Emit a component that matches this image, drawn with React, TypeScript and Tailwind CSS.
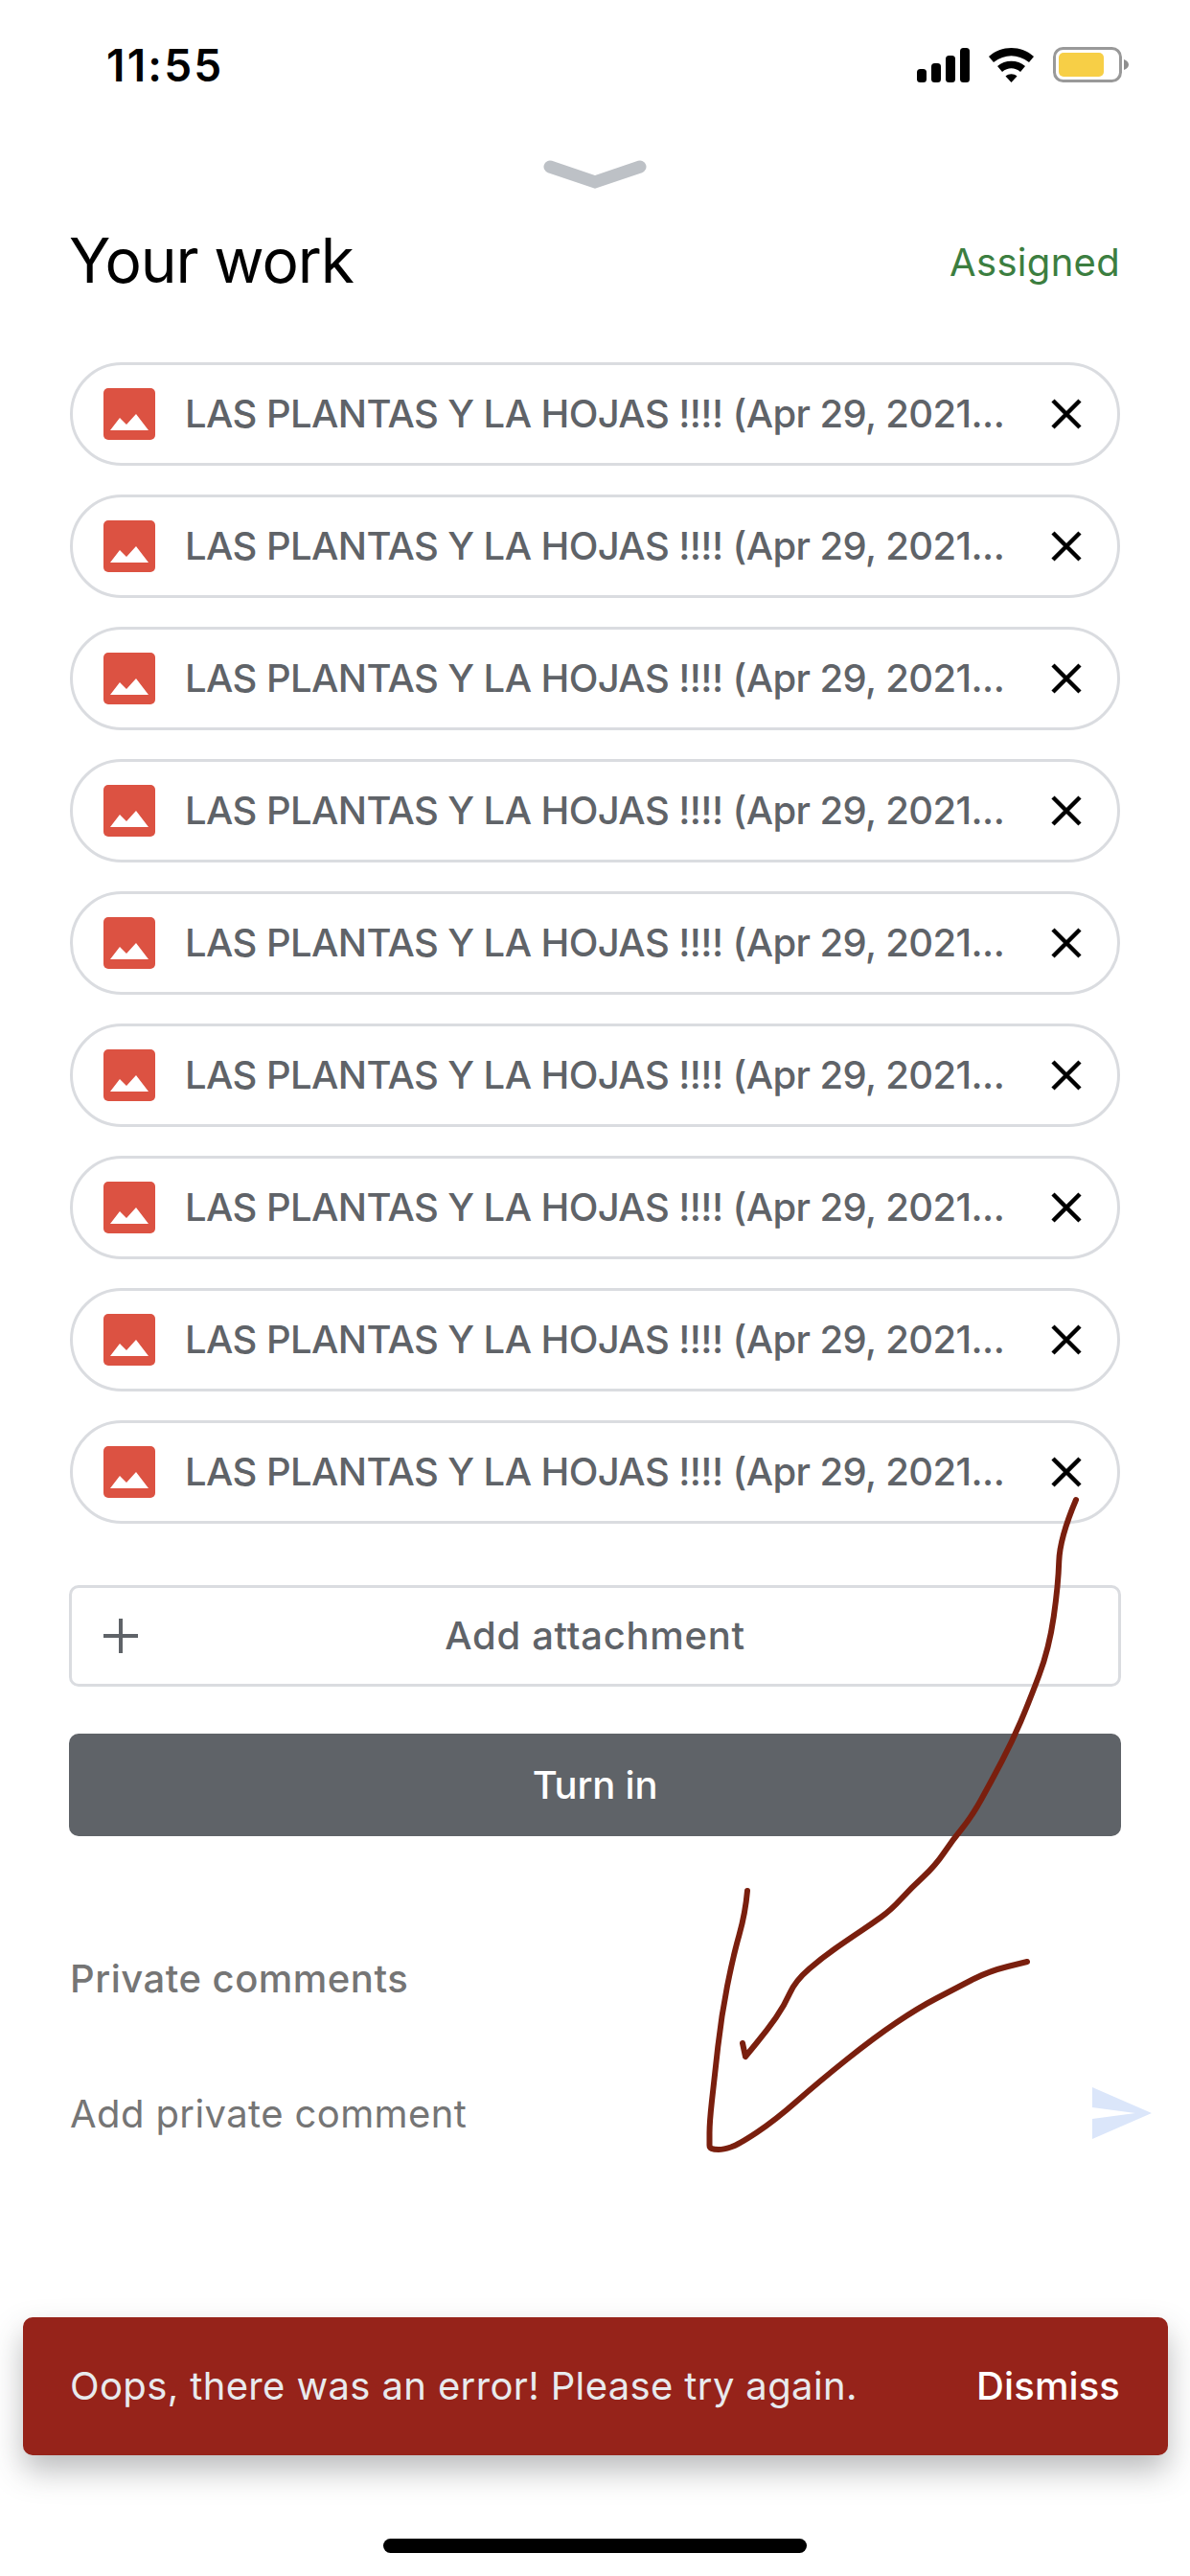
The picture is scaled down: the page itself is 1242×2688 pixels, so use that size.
const chips = Array.from({ length: 9 }, (_, i) => i);

const arrowShaft: [number, number][] = [
  [1123, 1565], [1106, 1605], [1104.5, 1654], [1095, 1720], [1074, 1776], [1056.5, 1817], [1035, 1858],
  [1014, 1896], [995, 1919], [976, 1947], [951, 1970], [930, 1993], [909, 2008], [889.5, 2021], [859, 2042],
  [830, 2067], [818.5, 2093], [801, 2118], [778, 2146],
];

const arrowHead: [number, number][] = [
  [780, 1973], [778, 1996], [765, 2042], [753, 2103], [745.5, 2169], [740.5, 2215], [740.5, 2236], [740.5, 2241],
  [745, 2243], [755, 2243], [770.5, 2238], [809, 2212.5], [855, 2172], [912.5, 2126], [958.6, 2095], [997, 2075],
  [1031.6, 2057], [1072, 2047],
];

// smooths a stroke by running quadratic curves between midpoints
function smoothPath(pts: [number, number][]) {
  let d = `M${pts[0][0]} ${pts[0][1]}`;
  for (let i = 1; i < pts.length - 1; i++) {
    const mx = (pts[i][0] + pts[i + 1][0]) / 2;
    const my = (pts[i][1] + pts[i + 1][1]) / 2;
    d += `Q${pts[i][0]} ${pts[i][1]} ${mx} ${my}`;
  }
  const last = pts[pts.length - 1];
  return `${d}L${last[0]} ${last[1]}`;
}

function SignalIcon() {
  return (
    <svg width="55" height="36" viewBox="0 0 55 36">
      <rect x="0" y="22" width="10" height="14" rx="3.5" fill="#000" />
      <rect x="15" y="16" width="10" height="20" rx="3.5" fill="#000" />
      <rect x="30" y="8" width="10" height="28" rx="3.5" fill="#000" />
      <rect x="45" y="0" width="10" height="36" rx="3.5" fill="#000" />
    </svg>
  );
}

function WifiIcon() {
  return (
    <svg width="47" height="36" viewBox="0 0 47 36">
      <path d="M0 9C13-3 34-3 47 9L42 15C30 6 17 6 5 15Z" fill="#000" />
      <path d="M9 19C17 12 30 12 38 19L33 25C27 20 20 20 14 25Z" fill="#000" />
      <path d="M17.5 29.5C21 26.5 26 26.5 29.5 29.5L23.5 36Z" fill="#000" />
    </svg>
  );
}

function BatteryIcon() {
  return (
    <svg width="79" height="37" viewBox="0 0 79 37">
      <rect x="1.5" y="1.5" width="69" height="34" rx="9" fill="none" stroke="#999999" strokeWidth="3" />
      <rect x="6" y="6" width="47" height="25" rx="5" fill="#f7cf46" />
      <path d="M74 13C77 14 79 16 79 18.5C79 21 77 23 74 24Z" fill="#8e8e8e" />
    </svg>
  );
}

function ImageIcon() {
  return (
    <svg width="54" height="54" viewBox="0 0 54 54" className="shrink-0">
      <rect width="54" height="54" rx="5" fill="#dc5242" />
      <path d="M7 44L17 31L24 38L34 27L47 44Z" fill="#fff" />
    </svg>
  );
}

function CloseIcon() {
  return (
    <svg width="32" height="32" viewBox="0 0 32 32" className="shrink-0">
      <path d="M2 2L30 30M30 2L2 30" stroke="#000" strokeWidth="4.5" fill="none" />
    </svg>
  );
}

function AttachmentChip() {
  return (
    <div className="flex h-[108px] items-center rounded-full border-[3px] border-[#dadce0] pl-[32px] pr-[37px]">
      <ImageIcon />
      <span className="ml-[31px] flex-1 whitespace-nowrap text-[40px] font-medium tracking-[-0.6px] text-[#5f6368]">
        LAS PLANTAS Y LA HOJAS !!!! (Apr 29, 2021...
      </span>
      <CloseIcon />
    </div>
  );
}

export default function App() {
  return (
    <div className="relative h-[2688px] w-[1242px] overflow-hidden bg-white font-['Inter',sans-serif]">
      {/* Status bar */}
      <div className="flex h-[136px] items-start justify-between pl-[111px] pr-[64px] pt-[40px]">
        <span className="text-[46px] font-semibold leading-[56px] tracking-[2.2px] text-black">11:55</span>
        <div className="flex items-center gap-[20px] pt-[9px]">
          <SignalIcon />
          <WifiIcon />
          <BatteryIcon />
        </div>
      </div>

      <div className="mt-[31px] flex justify-center">
        <svg width="108" height="30" viewBox="0 0 108 30">
          <path d="M7 7L54 23L101 7" stroke="#bdc1c6" strokeWidth="13" strokeLinecap="round" fill="none" />
        </svg>
      </div>

      {/* Header */}
      <div className="ml-[72px] mr-[73px] mt-[45px] flex h-[60px] items-center justify-between">
        <h1 className="text-[64px] font-normal leading-[60px] tracking-[-1.1px] text-black">Your work</h1>
        <span className="pt-[3px] text-[40px] leading-[60px] tracking-[0.3px] text-[#3c7e40]">Assigned</span>
      </div>

      {/* Attachments */}
      <div className="mx-[73px] mt-[76px] flex flex-col gap-[30px]">
        {chips.map((i) => (
          <AttachmentChip key={i} />
        ))}
      </div>

      <div className="relative mx-[72px] mt-[64px] flex h-[106px] items-center justify-center rounded-[10px] border-[3px] border-[#dadce0]">
        <svg width="36" height="36" viewBox="0 0 36 36" className="absolute left-[33px]">
          <path d="M18 0V36M0 18H36" stroke="#5f6368" strokeWidth="4" fill="none" />
        </svg>
        <span className="text-[40px] font-medium tracking-[0.7px] text-[#5f6368]">Add attachment</span>
      </div>

      <button className="mx-[72px] mt-[49px] flex h-[107px] w-[1098px] items-center justify-center rounded-[10px] bg-[#5f6368] text-[40px] font-medium tracking-[-0.2px] text-white">
        Turn in
      </button>

      {/* Comments */}
      <div className="mx-[73px] mt-[129px] h-[40px] text-[40px] font-medium leading-[40px] tracking-[0.5px] text-[#757575]">
        Private comments
      </div>
      <div className="ml-[73px] mr-[40px] mt-[93px] flex h-[54px] items-center justify-between">
        <span className="pt-[2px] text-[40px] tracking-[0.4px] text-[#757575]">Add private comment</span>
        <svg width="62" height="54" viewBox="0 0 62 54">
          <path d="M0 0L62 27L0 54V33L45 27L0 21Z" fill="#dbe6fa" />
        </svg>
      </div>

      {/* Error snackbar */}
      <div className="ml-[24px] mt-[186px] flex h-[144px] w-[1195px] items-center justify-between rounded-[10px] bg-[#96231a] pl-[49px] pr-[50px] shadow-[0_16px_32px_rgba(60,64,67,0.35)]">
        <span className="text-[40px] tracking-[0.37px] text-[#e8eaed]">Oops, there was an error! Please try again.</span>
        <span className="text-[40px] font-medium tracking-[0.1px] text-white">Dismiss</span>
      </div>

      <div className="mx-auto mt-[87px] h-[15px] w-[442px] rounded-full bg-black" />

      {/* Hand-drawn arrow on top of the screenshot */}
      <svg width="1242" height="2688" viewBox="0 0 1242 2688" className="pointer-events-none absolute left-0 top-0">
        <path d={`${smoothPath(arrowShaft)}L775 2132`} stroke="#7a1f0e" strokeWidth="6" strokeLinecap="round" strokeLinejoin="round" fill="none" />
        <path d={smoothPath(arrowHead)} stroke="#7a1f0e" strokeWidth="6" strokeLinecap="round" strokeLinejoin="round" fill="none" />
      </svg>
    </div>
  );
}
